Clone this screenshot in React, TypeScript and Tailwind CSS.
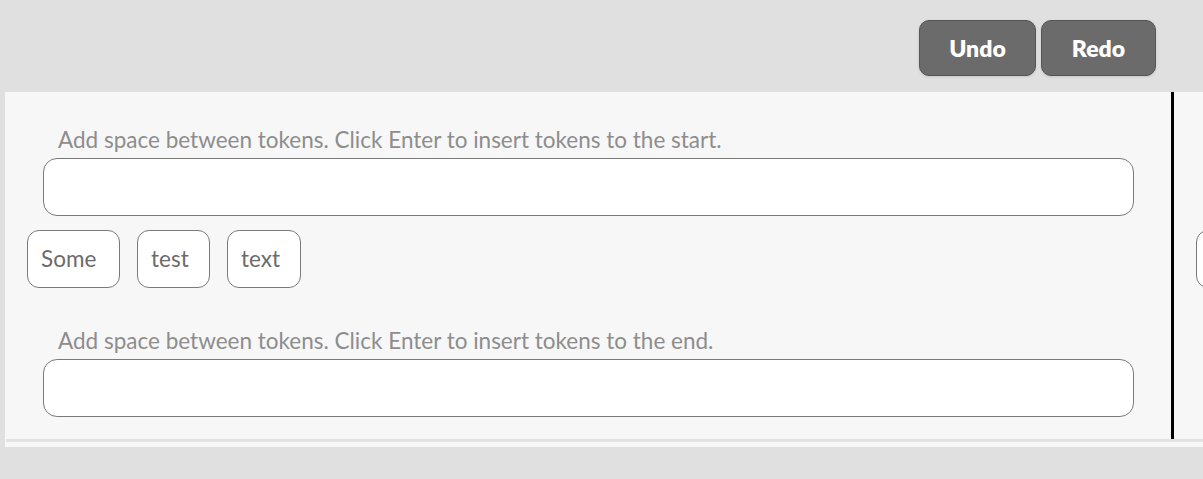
import React from 'react';

const tokens = [
  { label: 'Some', w: 'w-[93px]' },
  { label: 'test', w: 'w-[73px]' },
  { label: 'text', w: 'w-[74px]' },
];

const font = { fontFamily: 'Lato, "Open Sans", sans-serif' };

function TokenPanel() {
  return (
    <div className="shrink-0 w-[1169px] h-[350px] pt-[32px] border-r-[3px] border-black">
      <label className="block pl-[53px] text-[22.5px] leading-[31px] text-[#8d8d8d]">
        Add space between tokens. Click Enter to insert tokens to the start.
      </label>
      <input
        className="block ml-[38px] w-[1091px] h-[58px] mt-[3px] rounded-[14px] border border-[#7a7a7a] bg-white outline-none"
        type="text"
      />
      <div className="flex gap-[17px] pl-[22px] mt-[14px]">
        {tokens.map((t) => (
          <div
            key={t.label}
            className={`${t.w} h-[58px] pl-[13px] flex items-center rounded-[12px] border border-[#7a7a7a] bg-white text-[22.5px] text-[#6b6b6b]`}
          >
            {t.label}
          </div>
        ))}
      </div>
      <label className="block pl-[53px] mt-[37px] text-[22.5px] leading-[31px] text-[#8d8d8d]">
        Add space between tokens. Click Enter to insert tokens to the end.
      </label>
      <input
        className="block ml-[38px] w-[1091px] h-[58px] mt-[3px] rounded-[14px] border border-[#7a7a7a] bg-white outline-none"
        type="text"
      />
    </div>
  );
}

// next panel in the strip, only its first token edge peeks in
function NextPanel() {
  return (
    <div className="shrink-0 w-[200px] h-[350px] pt-[138px] pl-[22px]">
      <div className="w-[93px] h-[58px] rounded-[12px] border border-[#7a7a7a] bg-white" />
    </div>
  );
}

export default function App() {
  return (
    <div className="w-[1203px] h-[479px] bg-[#e0e0e0] overflow-hidden" style={font}>
      <div className="h-[92px] flex justify-end items-start pt-[20px] pr-[47px] gap-[5px]">
        <button className="w-[117px] h-[56px] rounded-[10px] bg-[#6b6b6b] border border-[#555] text-white font-extrabold text-[23px] shadow-sm">
          Undo
        </button>
        <button className="w-[115px] h-[56px] rounded-[10px] bg-[#6b6b6b] border border-[#555] text-white font-extrabold text-[23px] shadow-sm">
          Redo
        </button>
      </div>
      <div className="ml-[5px] h-[355px] bg-[#f7f7f7] overflow-hidden">
        <div className="flex h-[350px]">
          <TokenPanel />
          <NextPanel />
        </div>
        <div className="h-[3px] ml-[1px] bg-[#e2e2e2] -mt-[3px] relative" />
      </div>
    </div>
  );
}
